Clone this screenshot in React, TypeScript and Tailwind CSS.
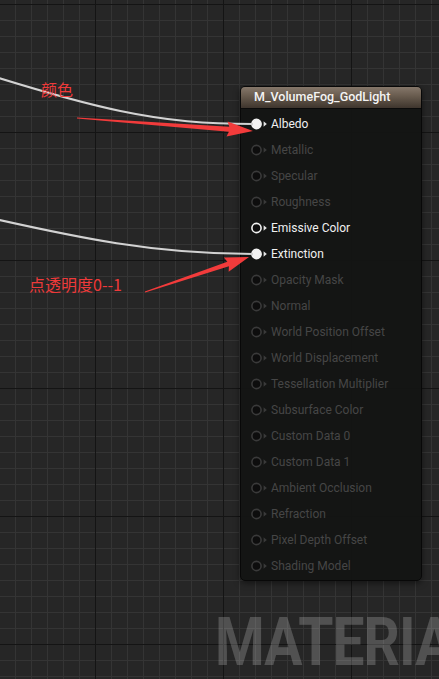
import React from 'react';

// Material node inputs, in the order the editor lists them
interface Pin {
  label: string;
  state: 'linked' | 'open' | 'off';
}

const pins: Pin[] = [
  { label: 'Albedo', state: 'linked' },
  { label: 'Metallic', state: 'off' },
  { label: 'Specular', state: 'off' },
  { label: 'Roughness', state: 'off' },
  { label: 'Emissive Color', state: 'open' },
  { label: 'Extinction', state: 'linked' },
  { label: 'Opacity Mask', state: 'off' },
  { label: 'Normal', state: 'off' },
  { label: 'World Position Offset', state: 'off' },
  { label: 'World Displacement', state: 'off' },
  { label: 'Tessellation Multiplier', state: 'off' },
  { label: 'Subsurface Color', state: 'off' },
  { label: 'Custom Data 0', state: 'off' },
  { label: 'Custom Data 1', state: 'off' },
  { label: 'Ambient Occlusion', state: 'off' },
  { label: 'Refraction', state: 'off' },
  { label: 'Pixel Depth Offset', state: 'off' },
  { label: 'Shading Model', state: 'off' },
];

const W = 439;
const H = 679;

// Grid lines of the graph canvas
function GridBackground() {
  const minorX: number[] = [];
  const minorY: number[] = [];
  for (let x = 15; x < W; x += 16) minorX.push(x);
  for (let y = 4; y < H; y += 16) minorY.push(y);
  const majorX = minorX.filter((x) => (x - 95) % 128 === 0);
  const majorY = minorY.filter((y) => (y - 4) % 128 === 0);

  return (
    <svg className="absolute inset-0" width={W} height={H}>
      <rect width={W} height={H} fill="#262626" />
      {minorX.map((x) => (
        <line key={`vx${x}`} x1={x + 0.5} y1={0} x2={x + 0.5} y2={H} stroke="#343434" strokeWidth={1} />
      ))}
      {minorY.map((y) => (
        <line key={`hy${y}`} x1={0} y1={y + 0.5} x2={W} y2={y + 0.5} stroke="#343434" strokeWidth={1} />
      ))}
      {majorX.map((x) => (
        <line key={`mx${x}`} x1={x + 0.5} y1={0} x2={x + 0.5} y2={H} stroke="#141414" strokeWidth={1} />
      ))}
      {majorY.map((y) => (
        <line key={`my${y}`} x1={0} y1={y + 0.5} x2={W} y2={y + 0.5} stroke="#141414" strokeWidth={1} />
      ))}
    </svg>
  );
}

// Tapered arrow as a polygon, tail -> tip
function arrowPoints(x1: number, y1: number, x2: number, y2: number, head = 22, headHalf = 7, shaftHalf = 2, tailHalf = 0.4) {
  const dx = x2 - x1;
  const dy = y2 - y1;
  const len = Math.hypot(dx, dy);
  const ux = dx / len;
  const uy = dy / len;
  const nx = -uy;
  const ny = ux;
  const bx = x2 - ux * head;
  const by = y2 - uy * head;
  const pts = [
    [x1 + nx * tailHalf, y1 + ny * tailHalf],
    [bx + nx * shaftHalf, by + ny * shaftHalf],
    [bx + nx * headHalf - ux * 2, by + ny * headHalf - uy * 2],
    [x2, y2],
    [bx - nx * headHalf - ux * 2, by - ny * headHalf - uy * 2],
    [bx - nx * shaftHalf, by - ny * shaftHalf],
    [x1 - nx * tailHalf, y1 - ny * tailHalf],
  ];
  return pts.map((p) => p.join(',')).join(' ');
}

function PinIcon({ state }: { state: Pin['state'] }) {
  const ring = state === 'off' ? '#3a3a3a' : '#f2f2f2';
  const fill = state === 'linked' ? '#f2f2f2' : '#0d0d0d';
  return (
    <svg width="18" height="12" viewBox="0 0 18 12" className="shrink-0">
      <circle cx="5.5" cy="6" r="4.6" fill={fill} stroke={ring} strokeWidth="1.6" />
      <path d="M12.6 3.2 L15.8 6 L12.6 8.8 Z" fill={state === 'off' ? '#3a3a3a' : '#e6e6e6'} />
    </svg>
  );
}

function MaterialNode() {
  return (
    <div className="absolute left-[240px] top-[86px] w-[182px] rounded-[5px] border border-[#080808] bg-[#131413]/95 shadow-[0_2px_6px_rgba(0,0,0,0.5)] font-['Roboto',sans-serif]">
      <div className="h-[22px] rounded-t-[4px] bg-[linear-gradient(180deg,#85776a_0%,#675a4d_45%,#3e352d_100%)] pl-[13px] flex items-center border-b border-[#0a0a0a]">
        <span className="text-[12.5px] font-medium text-[#f4f4f4] leading-none">M_VolumeFog_GodLight</span>
      </div>
      <div className="pt-[2px] pb-[1px]">
        {pins.map((pin) => (
          <div key={pin.label} className="h-[26px] flex items-center pl-[10px] gap-[2px]">
            <PinIcon state={pin.state} />
            <span
              className={
                pin.state === 'off'
                  ? 'text-[12px] leading-none text-[#464646]'
                  : 'text-[12px] leading-none text-[#f0f0f0]'
              }
            >
              {pin.label}
            </span>
          </div>
        ))}
      </div>
    </div>
  );
}

export default function App() {
  return (
    <div className="relative w-[439px] h-[679px] overflow-hidden bg-[#262626]">
      <GridBackground />

      {/* watermark bottom right */}
      <div className="absolute left-[215px] top-[610px] origin-left scale-x-[0.86] text-[66px] font-bold leading-none tracking-[-1px] text-white/20 font-['Roboto',sans-serif] whitespace-nowrap select-none">
        MATERIAL
      </div>

      <MaterialNode />

      {/* wires and annotation arrows */}
      <svg className="absolute inset-0 pointer-events-none" width={W} height={H}>
        <path d="M -70 56 C 100 112, 160 124, 253 124" fill="none" stroke="#d2d2d2" strokeWidth="2" />
        <path d="M -70 204 C 90 242, 160 254, 253 254" fill="none" stroke="#d2d2d2" strokeWidth="2" />
        <polygon points={arrowPoints(77, 118, 253, 131, 24, 7.5, 2.4)} fill="#f23b3b" />
        <polygon points={arrowPoints(145, 292, 249, 257, 22, 7.5, 2.4)} fill="#f23b3b" />
      </svg>

      <span className="absolute left-[41px] top-[81px] text-[16px] leading-none text-[#ee3a3a] font-['Noto_Sans_CJK_SC',sans-serif]">
        颜色
      </span>
      <span className="absolute left-[29px] top-[276px] text-[16px] leading-none text-[#ee3a3a] font-['Noto_Sans_CJK_SC',sans-serif] whitespace-nowrap">
        点透明度0--1
      </span>
    </div>
  );
}
